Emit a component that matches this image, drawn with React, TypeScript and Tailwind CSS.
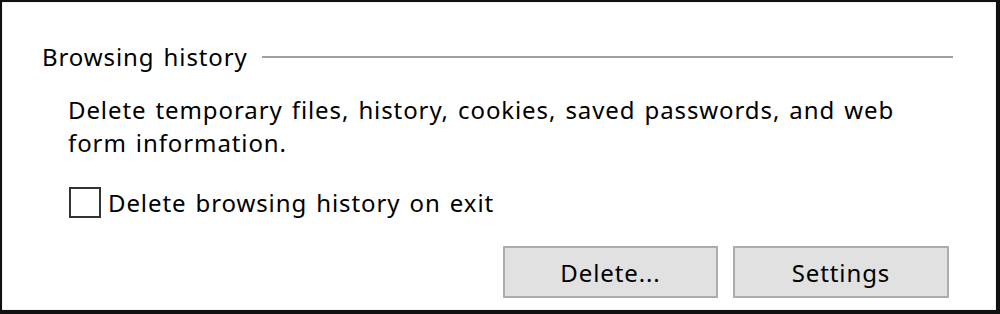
export default function App() {
  const font = { fontFamily: '"Noto Sans", "Open Sans", sans-serif' };
  return (
    <div
      className="w-[1000px] h-[314px] bg-white border-t-2 border-l-2 border-r-4 border-b-4 border-[#111] text-black text-[24px] leading-[33px] tracking-[0.9px] [word-spacing:2px]"
      style={font}
    >
      <div className="h-full border border-[#f0f0f0] pl-[39px] pr-[42px] pt-[37px]">
        <div className="flex items-center gap-[14px]">
          <span className="whitespace-nowrap">Browsing history</span>
          <div className="flex-1 h-[2px] bg-[#a0a0a0]" />
        </div>

        <p className="ml-[26px] mt-[20px] w-[860px]">
          Delete temporary files, history, cookies, saved passwords, and web form information.
        </p>

        <label className="ml-[27px] mt-[27px] flex items-center gap-[7px]">
          <span className="w-[32px] h-[31px] border-2 border-[#333] bg-white" />
          <span>Delete browsing history on exit</span>
        </label>

        <div className="mt-[27px] flex justify-end gap-[15px] pr-[4px]">
          <button className="w-[215px] h-[52px] bg-[#e1e1e1] border-2 border-[#adadad]">Delete...</button>
          <button className="w-[216px] h-[52px] bg-[#e1e1e1] border-2 border-[#adadad]">Settings</button>
        </div>
      </div>
    </div>
  );
}
